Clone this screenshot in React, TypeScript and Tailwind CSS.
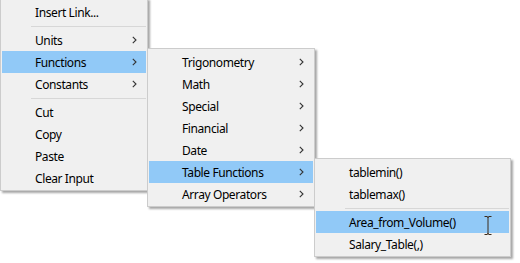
import React from 'react';

type Item = { label?: string; sub?: boolean; active?: boolean; sep?: boolean };

const Chevron = () => (
  <svg width="5" height="8" viewBox="0 0 5 8" className="shrink-0">
    <path d="M0.8 0.8 L4 4 L0.8 7.2" fill="none" stroke="#333" strokeWidth="1.1" />
  </svg>
);

const Menu = ({ items, className }: { items: Item[]; className: string }) => (
  <div
    className={`absolute bg-[#f0f0f0] border border-[#cccccc] px-[1px] pt-[2px] pb-[1px] shadow-[2px_2px_2px_rgba(0,0,0,0.35)] ${className}`}
  >
    {items.map((it, i) =>
      it.sep ? (
        <div key={i} className="h-[6px] flex items-center pl-[29px]">
          <div className="h-px w-full bg-[#d7d7d7]" />
        </div>
      ) : (
        <div
          key={i}
          className={`h-[22px] flex items-center pl-[33px] pr-[9px] ${it.active ? 'bg-[#91c9f7]' : ''}`}
        >
          <span className="flex-1 text-[12px] tracking-[-0.4px] text-black leading-none pt-[1px]">{it.label}</span>
          {it.sub && <Chevron />}
        </div>
      )
    )}
  </div>
);

export default function App() {
  const menu1: Item[] = [
    { label: 'Insert Link...' },
    { sep: true },
    { label: 'Units', sub: true },
    { label: 'Functions', sub: true, active: true },
    { label: 'Constants', sub: true },
    { sep: true },
    { label: 'Cut' },
    { label: 'Copy' },
    { label: 'Paste' },
    { label: 'Clear Input' },
  ];
  const menu2: Item[] = [
    { label: 'Trigonometry', sub: true },
    { label: 'Math', sub: true },
    { label: 'Special', sub: true },
    { label: 'Financial', sub: true },
    { label: 'Date', sub: true },
    { label: 'Table Functions', sub: true, active: true },
    { label: 'Array Operators', sub: true },
  ];
  const menu3: Item[] = [
    { label: 'tablemin()' },
    { label: 'tablemax()' },
    { sep: true },
    { label: 'Area_from_Volume()', active: true },
    { label: 'Salary_Table(,)' },
  ];

  return (
    <div
      className="relative w-[520px] h-[263px] bg-white overflow-hidden"
      style={{ fontFamily: '"Noto Sans", "Open Sans", sans-serif' }}
    >
      <Menu items={menu1} className="left-0 top-[-2px] w-[148px]" />
      <Menu items={menu2} className="left-[147px] top-[48px] w-[168px]" />
      <Menu items={menu3} className="left-[314px] top-[158px] w-[197px]" />
      <svg className="absolute left-[483px] top-[216px]" width="10" height="19" viewBox="0 0 10 19">
        <path d="M1.5 0.5 H4 M6 0.5 H8.5 M4 0.5 Q5 0.5 5 2 V17 Q5 18.5 4 18.5 M6 0.5 Q5 0.5 5 2 M5 17 Q5 18.5 6 18.5 M1.5 18.5 H4 M6 18.5 H8.5" fill="none" stroke="#3a2a1a" strokeWidth="1" />
      </svg>
    </div>
  );
}
